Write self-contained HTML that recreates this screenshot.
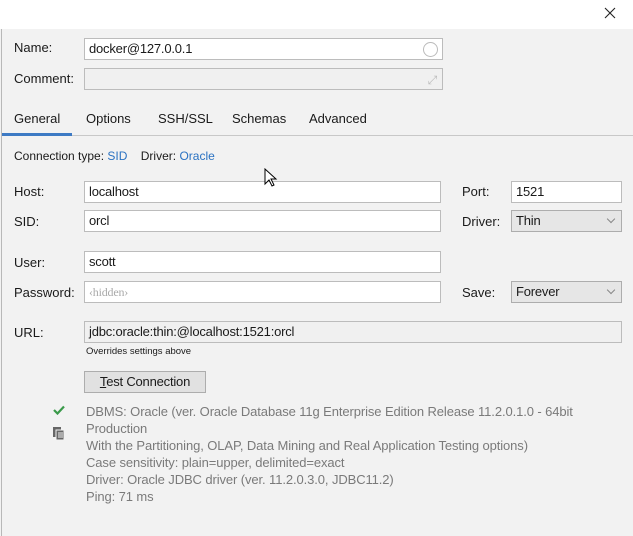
<!DOCTYPE html>
<html><head><meta charset="utf-8"><style>
*{margin:0;padding:0;box-sizing:border-box}
body{width:633px;height:536px;overflow:hidden;background:#f2f2f2;font-family:"Liberation Sans","Noto Sans CJK SC",sans-serif;font-size:13px;color:#1a1a1a;position:relative}
.a{position:absolute;white-space:nowrap}
.top{position:absolute;left:0;top:0;width:633px;height:29px;background:#fff}
.lb{position:absolute;left:1px;top:29px;width:1px;height:507px;background:#b8b8b8}
.in{position:absolute;height:22px;border:1px solid #bcbcbc;background:#fff;padding:0 0 0 4px;line-height:20px;letter-spacing:-0.2px}
.g{background:#f0f0f0}
.sel{background:#e6e6e6;border-color:#adadad}
.sel:after{content:"";position:absolute;right:7px;top:5px;width:5px;height:5px;border-right:1px solid #888;border-bottom:1px solid #888;transform:rotate(45deg)}
.blue{color:#2a72c2}
.res{position:absolute;left:86px;top:403px;color:#7a7a7a;line-height:17px;letter-spacing:-0.1px}
</style></head><body>
<div class="top"></div>
<div class="lb"></div>
<svg class="a" style="left:604px;top:7px" width="12" height="12"><path d="M1 1L11 11M11 1L1 11" stroke="#222" stroke-width="1.1"/></svg>
<div class="a" style="left:14px;top:40px">Name:</div>
<div class="in" style="left:84px;top:38px;width:359px">docker@127.0.0.1<span style="position:absolute;right:4px;top:3px;width:15px;height:15px;border:1px solid #bbb;border-radius:50%"></span></div>
<div class="a" style="left:14px;top:71px">Comment:</div>
<div class="in g" style="left:84px;top:68px;width:359px"><span style="position:absolute;right:5px;top:1px;color:#bbb;font-size:12px">⤢</span></div>
<div class="a" style="left:14px;top:111px">General</div>
<div class="a" style="left:86px;top:111px">Options</div>
<div class="a" style="left:158px;top:111px">SSH/SSL</div>
<div class="a" style="left:232px;top:111px">Schemas</div>
<div class="a" style="left:309px;top:111px">Advanced</div>
<div class="a" style="left:2px;top:135px;width:631px;height:1px;background:#c8c8c8"></div>
<div class="a" style="left:2px;top:133px;width:70px;height:3px;background:#3d7ac4"></div>
<div class="a" style="left:14px;top:149px;font-size:12px">Connection type: <span class="blue">SID</span>&nbsp;&nbsp;&nbsp;&nbsp;Driver: <span class="blue">Oracle</span></div>
<div class="a" style="left:14px;top:184px">Host:</div>
<div class="in" style="left:84px;top:181px;width:357px">localhost</div>
<div class="a" style="left:462px;top:184px">Port:</div>
<div class="in" style="left:511px;top:181px;width:111px">1521</div>
<div class="a" style="left:14px;top:214px">SID:</div>
<div class="in" style="left:84px;top:210px;width:357px">orcl</div>
<div class="a" style="left:462px;top:214px">Driver:</div>
<div class="in sel" style="left:511px;top:210px;width:111px">Thin</div>
<div class="a" style="left:14px;top:255px">User:</div>
<div class="in" style="left:84px;top:251px;width:357px">scott</div>
<div class="a" style="left:14px;top:285px">Password:</div>
<div class="in" style="left:84px;top:281px;width:357px;color:#aaa;font-family:'Liberation Serif',serif;font-size:12px">‹hidden›</div>
<div class="a" style="left:462px;top:285px">Save:</div>
<div class="in sel" style="left:511px;top:281px;width:111px">Forever</div>
<div class="a" style="left:14px;top:325px">URL:</div>
<div class="in g" style="left:84px;top:321px;width:538px">jdbc:oracle:thin:@localhost:1521:orcl</div>
<div class="a" style="left:86px;top:346px;font-size:9.5px">Overrides settings above</div>
<div class="in" style="left:84px;top:371px;width:122px;height:22px;background:#e1e1e1;border-color:#adadad;text-align:center;padding:0"><u>T</u>est Connection</div>
<svg class="a" style="left:53px;top:405px" width="12" height="10"><path d="M1 5L4.5 8.5L11 1.5" stroke="#3a9a4a" stroke-width="2.2" fill="none"/></svg>
<svg class="a" style="left:53px;top:427px" width="12" height="13"><rect x="0" y="0" width="8" height="10" fill="#666"/><rect x="3" y="3" width="8" height="10" fill="#666" stroke="#f2f2f2" stroke-width="1"/><path d="M5 6h5M5 8h5M5 10h5" stroke="#f2f2f2"/></svg>
<div class="res">DBMS: Oracle (ver. Oracle Database 11g Enterprise Edition Release 11.2.0.1.0 - 64bit<br>Production<br>With the Partitioning, OLAP, Data Mining and Real Application Testing options)<br>Case sensitivity: plain=upper, delimited=exact<br>Driver: Oracle JDBC driver (ver. 11.2.0.3.0, JDBC11.2)<br>Ping: 71 ms</div>
<svg class="a" style="left:264px;top:168px" width="14" height="20"><path d="M1 1v15l4-4 3 6 2-1-3-6h5z" fill="#fff" stroke="#000"/></svg>
</body></html>
